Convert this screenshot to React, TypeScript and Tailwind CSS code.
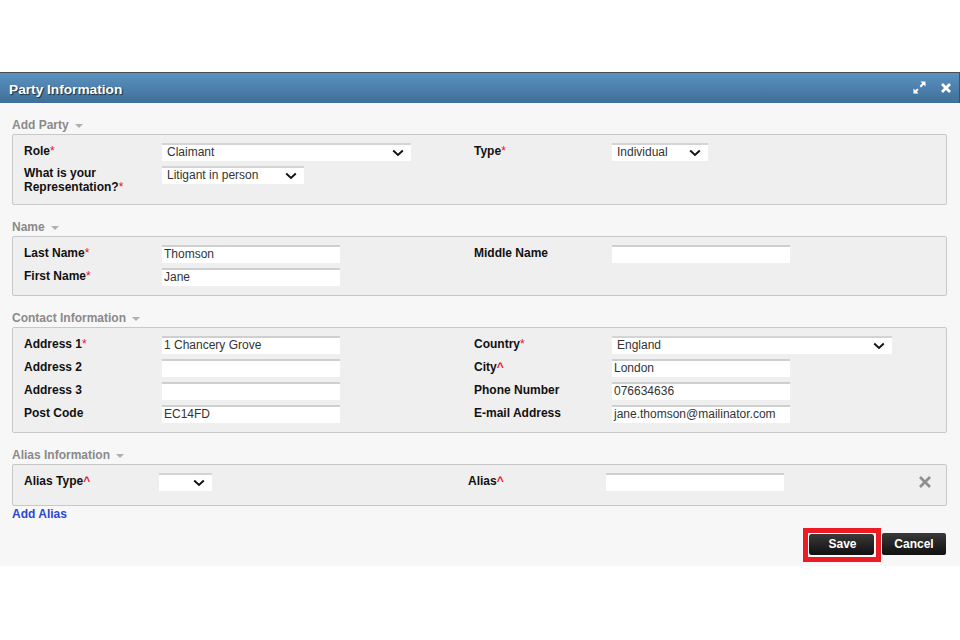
import React from "react";

const Chevron = () => (
  <svg width="12" height="8" viewBox="0 0 12 8" className="absolute right-[7px] top-[4px]" fill="none">
    <path d="M1.2 1.5 L6 6 L10.8 1.5" stroke="#111" strokeWidth="1.9" />
  </svg>
);

const Caret = () => (
  <span className="ml-[6px] inline-block h-0 w-0 border-x-[4px] border-t-[4px] border-x-transparent border-t-[#b0b0b0] align-middle" />
);

const Req = ({ c = "*" }: { c?: string }) => (
  <span className={c === "^" ? "font-bold text-[#f0142f]" : "font-normal text-[#e8112d]"}>{c}</span>
);

const Label = ({ children, w = "w-[138px]", tight = false }: { children: React.ReactNode; w?: string; tight?: boolean }) => (
  <div className={`${w} ${tight ? "pt-0" : "pt-[1px]"} shrink-0 text-[12px] leading-[14px] font-bold text-[#111]`}>{children}</div>
);

const Input = ({ value = "" }: { value?: string }) => (
  <div className="h-[18px] w-[178px] shrink-0 border-t-2 border-[#cfcfcf] bg-white pl-[2px] text-[12px] leading-[14px] text-[#333]">
    {value}
  </div>
);

const Select = ({ value = "", w }: { value?: string; w: string }) => (
  <div className={`relative h-[18px] ${w} shrink-0 border-t-2 border-[#d4d4d4] bg-white pl-[5px] text-[12px] leading-[15px] text-[#333]`}>
    {value}
    <Chevron />
  </div>
);

const Legend = ({ children }: { children: React.ReactNode }) => (
  <div className="h-[17px] text-[12px] leading-[16px] font-bold text-[#8a8a8a]">
    {children}
    <Caret />
  </div>
);

const Panel = ({ h, children }: { h: string; children: React.ReactNode }) => (
  <div className={`${h} rounded-[2px] border border-[#c8c8c8] bg-[#efefef] pl-[11px] pt-[8px]`}>{children}</div>
);

const Row = ({ children, h = "h-[23px]" }: { children: React.ReactNode; h?: string }) => (
  <div className={`flex items-start ${h}`}>{children}</div>
);

const Left = ({ children }: { children: React.ReactNode }) => (
  <div className="flex w-[450px] shrink-0 items-start">{children}</div>
);

export default function App() {
  return (
    <div className="h-[640px] w-[960px] bg-white pt-[72px] font-['Liberation_Sans',Arial,sans-serif]">
      <div className="flex h-[494px] flex-col bg-[#f7f7f7]">
        <div className="flex h-[31px] items-center justify-between border-t border-r border-[#4a4f55] bg-gradient-to-b from-[#5b92c0] to-[#3f6f99] pl-[9px] pr-[8px]">
          <span className="pt-[5px] text-[13.7px] font-bold text-white [text-shadow:1px_1px_1px_#1c2c3c]">Party Information</span>
          <div className="flex items-center gap-[15px]">
            <svg width="13" height="13" viewBox="0 0 13 13" fill="#fff" className="-mt-[1px]">
              <path d="M7.5 0.5 H12.5 V5.5 L10.8 3.8 L8 6.4 L6.6 5 L9.2 2.2 Z" />
              <path d="M0.5 7.5 V12.5 H5.5 L3.8 10.8 L5.6 8.8 L4.2 7.4 L2.2 9.2 Z" />
            </svg>
            <svg width="10" height="10" viewBox="0 0 10 10" stroke="#fff" strokeWidth="2.8">
              <path d="M1 1 L9 9 M9 1 L1 9" />
            </svg>
          </div>
        </div>

        <div className="relative flex-1 pl-[12px] pr-[13px] pt-[14px]">
          <Legend>Add Party</Legend>
          <Panel h="h-[71px]">
            <Row>
              <Left>
                <Label>Role<Req /></Label>
                <Select value="Claimant" w="w-[249px]" />
              </Left>
              <Label>Type<Req /></Label>
              <Select value="Individual" w="w-[96px]" />
            </Row>
            <Row h="h-[32px]">
              <Left>
                <Label tight>What is your<br />Representation?<Req /></Label>
                <Select value="Litigant in person" w="w-[142px]" />
              </Left>
            </Row>
          </Panel>

          <div className="mt-[14px]"><Legend>Name</Legend></div>
          <Panel h="h-[60px]">
            <Row>
              <Left>
                <Label>Last Name<Req /></Label>
                <Input value="Thomson" />
              </Left>
              <Label>Middle Name</Label>
              <Input />
            </Row>
            <Row>
              <Left>
                <Label>First Name<Req /></Label>
                <Input value="Jane" />
              </Left>
            </Row>
          </Panel>

          <div className="mt-[14px]"><Legend>Contact Information</Legend></div>
          <Panel h="h-[106px]">
            <Row>
              <Left>
                <Label>Address 1<Req /></Label>
                <Input value="1 Chancery Grove" />
              </Left>
              <Label>Country<Req /></Label>
              <Select value="England" w="w-[280px]" />
            </Row>
            <Row>
              <Left>
                <Label>Address 2</Label>
                <Input />
              </Left>
              <Label>City<Req c="^" /></Label>
              <Input value="London" />
            </Row>
            <Row>
              <Left>
                <Label>Address 3</Label>
                <Input />
              </Left>
              <Label>Phone Number</Label>
              <Input value="076634636" />
            </Row>
            <Row>
              <Left>
                <Label>Post Code</Label>
                <Input value="EC14FD" />
              </Left>
              <Label>E-mail Address</Label>
              <Input value="jane.thomson@mailinator.com" />
            </Row>
          </Panel>

          <div className="mt-[14px]"><Legend>Alias Information</Legend></div>
          <Panel h="h-[42px]">
            <Row>
              <div className="flex w-[444px] shrink-0 items-start">
                <Label w="w-[135px]">Alias Type<Req c="^" /></Label>
                <Select w="w-[53px]" />
              </div>
              <Label>Alias<Req c="^" /></Label>
              <Input />
              <svg width="12" height="12" viewBox="0 0 12 12" stroke="#8f8f8f" strokeWidth="2.8" className="ml-[135px] mt-[3px]">
                <path d="M1 1 L11 11 M11 1 L1 11" />
              </svg>
            </Row>
          </Panel>
          <div className="mt-[1px] text-[12px] leading-[14px] font-bold text-[#2b46d8]">Add Alias</div>

          <div className="absolute right-[14px] bottom-[11px] flex items-center gap-[8px]">
            <div className="relative flex h-[21px] w-[65px] items-center justify-center rounded-[2px] bg-gradient-to-b from-[#3a3a3a] to-[#111] pl-[2px] text-[12px] font-bold text-white outline-[1px] outline-white">
              Save
              <div className="pointer-events-none absolute -top-[6px] -bottom-[7px] -left-[6px] -right-[7px] border-[5px] border-[#ed1c24]" />
            </div>
            <div className="flex h-[22px] w-[64px] items-center justify-center rounded-[2px] bg-gradient-to-b from-[#3a3a3a] to-[#111] text-[12px] font-bold text-white">
              Cancel
            </div>
          </div>
        </div>
      </div>
    </div>
  );
}
